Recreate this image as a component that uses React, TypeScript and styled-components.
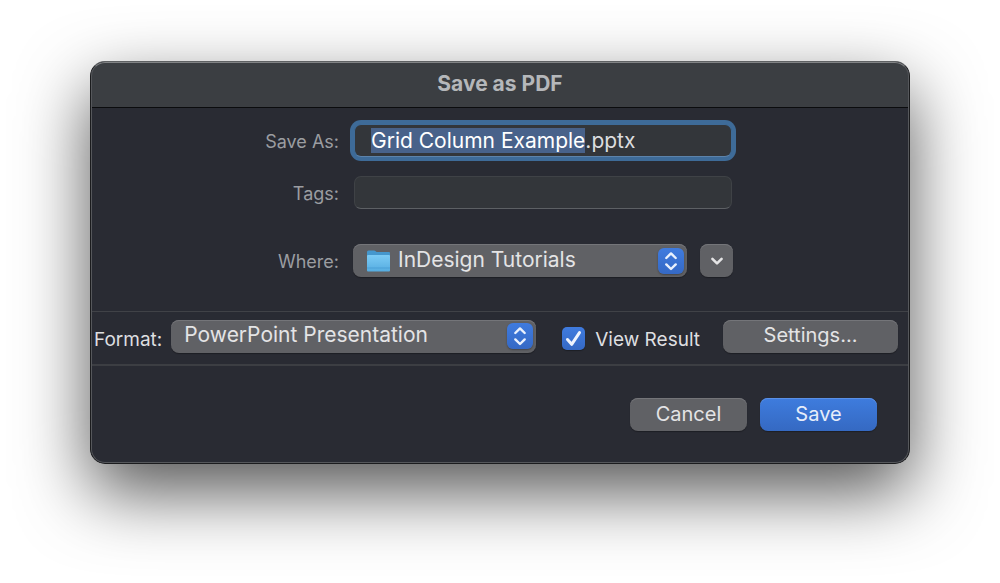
import React, { useEffect, useRef } from "react";
import styled, { createGlobalStyle, css } from "styled-components";

const Global = createGlobalStyle`
  *, *::before, *::after { box-sizing: border-box; }
  html, body { margin: 0; background: #fff; }
  body { font-family: Inter, "Liberation Sans", sans-serif; overflow-x: hidden; }
  #root { overflow: hidden; }
`;

const Desktop = styled.main`
  min-height: 100vh;
  padding: 61px 90px 120px;
  background: #fff;
`;

const Dialog = styled.form`
  position: relative;
  min-width: 800px;
  border: 1px solid #1b1c1e;
  border-top-color: #5f6163;
  border-radius: 15px;
  background: #292b33;
  overflow: hidden;
`;

const DialogShadow = styled.div`
  border-radius: 15px;
  box-shadow: 0 28px 70px rgba(0, 0, 0, 0.67);
`;

const Rim = styled.div`
  position: absolute;
  inset: 0;
  border: 1px solid #55575b;
  border-top-color: #828486;
  border-radius: 14px;
  pointer-events: none;
`;

const TitleBar = styled.header`
  display: flex;
  align-items: center;
  justify-content: center;
  height: 46px;
  padding-bottom: 2px;
  border-bottom: 1px solid #0b0c0e;
  background: #3b3e42;
`;

const Title = styled.h1`
  margin: 0;
  color: #b5b7ba;
  font-size: 21px;
  line-height: 24px;
  font-weight: 700;
`;

const Fields = styled.div`
  display: grid;
  grid-template-columns: 248fr 378fr 162fr;
  column-gap: 15px;
  padding: 16px 0 34px;
`;

const FieldRow = styled.div<{ $spaced?: boolean }>`
  display: grid;
  grid-column: 1 / -1;
  grid-template-columns: subgrid;
  align-items: center;
  margin-bottom: ${(p) => (p.$spaced ? 35 : 19)}px;
  &:last-child { margin-bottom: 0; }
`;

const FieldLabel = styled.label`
  padding-top: 3px;
  color: #9b9da1;
  font-size: 18px;
  line-height: 24px;
  text-align: right;
`;

const TextField = styled.input<{ $active?: boolean }>`
  width: 100%;
  height: 33px;
  padding: 0 16px;
  border: 1px solid #3f4246;
  border-bottom-color: #5d6064;
  border-radius: 7px;
  outline: none;
  background: #33363a;
  color: #dcdddf;
  font: 400 21px/28px Inter, "Liberation Sans", sans-serif;
  &::selection { background: #48628a; color: #fff; }
  ${(p) =>
    p.$active &&
    css`
      border-color: #3e6b98;
      border-bottom-color: #5c83ab;
      box-shadow: 0 0 0 4px #3e6b98;
    `}
`;

const PopupRow = styled.div`
  display: flex;
  gap: 13px;
  margin: 0 -1px;
`;

const Popup = styled.div`
  display: grid;
  flex: 1;
  align-items: center;
  & > * { grid-area: 1 / 1; }
`;

const raised = css`
  border: 0;
  border-radius: 8px;
  background: #606165;
  box-shadow: inset 0 1px #747579, 0 1px 1px rgba(0, 0, 0, 0.3);
  color: #e4e4e5;
  font: 400 20px/24px Inter, "Liberation Sans", sans-serif;
`;

const Select = styled.select<{ $withIcon?: boolean }>`
  ${raised}
  appearance: none;
  width: 100%;
  height: 33px;
  padding: 0 40px 2px ${(p) => (p.$withIcon ? 45 : 13)}px;
  font-size: 21px;
`;

const StepperBadge = styled.span`
  display: grid;
  place-items: center;
  justify-self: end;
  width: 26px;
  height: 26px;
  margin-right: 3px;
  border-radius: 6px;
  background: linear-gradient(#3f7bdf, #3569c5);
  box-shadow: 0 1px 2px rgba(0, 0, 0, 0.3);
  pointer-events: none;
`;

const FolderIcon = styled.svg`
  justify-self: start;
  margin-left: 13px;
  pointer-events: none;
`;

const Button = styled.button<{ $primary?: boolean; $width: number }>`
  ${raised}
  width: ${(p) => p.$width}px;
  height: 33px;
  padding: 0 0 2px;
  ${(p) =>
    p.$primary &&
    css`
      background: linear-gradient(#3e7cde, #3569c2);
      box-shadow: inset 0 1px #5a90e6, 0 1px 1px rgba(0, 0, 0, 0.3);
      color: #e6edfa;
    `}
`;

const IconButton = styled.button`
  ${raised}
  display: grid;
  place-items: center;
  width: 33px;
  height: 33px;
  padding: 0;
`;

const Options = styled.section`
  display: flex;
  align-items: center;
  height: 55px;
  padding: 0 11px 4px 3px;
  border-top: 1px solid #404247;
  border-bottom: 2px solid #3c3e43;
`;

const OptionLabel = styled.label`
  color: #dedfe0;
  font-size: 19px;
  line-height: 24px;
  padding-top: 8px;
`;

const FormatPopup = styled(Popup)`
  margin: 0 26px 0 9px;
`;

const CheckBox = styled.span`
  display: grid;
  margin: 4px 10px 0 0;
  & > * { grid-area: 1 / 1; }
`;

const CheckInput = styled.input`
  appearance: none;
  width: 23px;
  height: 23px;
  margin: 0;
  border-radius: 5px;
  background: linear-gradient(#3f7bdf, #3569c5);
  box-shadow: 0 1px 1px rgba(0, 0, 0, 0.3);
`;

const Tick = styled.svg`
  pointer-events: none;
`;

const SettingsSlot = styled.div`
  display: flex;
  margin-left: 23px;
`;

const Actions = styled.footer`
  display: flex;
  justify-content: flex-end;
  gap: 13px;
  padding: 32px 32px;
`;

function Stepper() {
  return (
    <StepperBadge aria-hidden="true">
      <svg width="26" height="26" viewBox="0 0 26 26" fill="none" stroke="#eaf1fd" strokeWidth="2.4" strokeLinecap="round" strokeLinejoin="round">
        <path d="M8.3 10 13 5.4 17.7 10M8.3 16.4 13 21 17.7 16.4" />
      </svg>
    </StepperBadge>
  );
}

export default function App() {
  const nameRef = useRef<HTMLInputElement>(null);

  useEffect(() => {
    const el = nameRef.current;
    if (!el) return;
    el.focus({ preventScroll: true });
    el.setSelectionRange(0, el.value.lastIndexOf("."));
  }, []);

  return (
    <>
      <Global />
      <Desktop>
        <DialogShadow>
          <Dialog onSubmit={(e) => e.preventDefault()}>
            <TitleBar>
              <Title>Save as PDF</Title>
            </TitleBar>
            <Fields>
              <FieldRow>
                <FieldLabel htmlFor="name">Save As:</FieldLabel>
                <TextField id="name" ref={nameRef} $active defaultValue="Grid Column Example.pptx" spellCheck={false} autoComplete="off" />
              </FieldRow>
              <FieldRow $spaced>
                <FieldLabel htmlFor="tags">Tags:</FieldLabel>
                <TextField id="tags" />
              </FieldRow>
              <FieldRow>
                <FieldLabel htmlFor="where">Where:</FieldLabel>
                <PopupRow>
                  <Popup>
                    <Select id="where" $withIcon>
                      <option>InDesign Tutorials</option>
                    </Select>
                    <FolderIcon width="25" height="22" viewBox="0 0 25 22" aria-hidden="true">
                      <defs>
                        <linearGradient id="folder" x1="0" y1="0" x2="0" y2="1">
                          <stop offset="0" stopColor="#7ccbf5" />
                          <stop offset="1" stopColor="#55ace0" />
                        </linearGradient>
                      </defs>
                      <path d="M1 20V2Q1 .5 2.500 .5H8Q9 .5 9.700 1.200L10.600 2H23Q24 2 24 3V20Z" fill="#4597cd" />
                      <path d="M1 6Q1 5 2 5H23Q24 5 24 6V20.500Q24 21.500 23 21.500H2Q1 21.500 1 20.500Z" fill="url(#folder)" />
                      <path d="M1 18H24" stroke="#4b9fd6" strokeWidth="1" />
                    </FolderIcon>
                    <Stepper />
                  </Popup>
                  <IconButton type="button" aria-label="Show more options">
                    <svg width="14" height="10" viewBox="0 0 14 10" fill="none" stroke="#e4e4e5" strokeWidth="2.6" strokeLinecap="round" strokeLinejoin="round">
                      <path d="M2.400 2.800 7 7.400 11.600 2.800" />
                    </svg>
                  </IconButton>
                </PopupRow>
              </FieldRow>
            </Fields>
            <Options>
              <OptionLabel htmlFor="format">Format:</OptionLabel>
              <FormatPopup>
                <Select id="format">
                  <option>PowerPoint Presentation</option>
                </Select>
                <Stepper />
              </FormatPopup>
              <CheckBox>
                <CheckInput id="view" type="checkbox" defaultChecked />
                <Tick width="23" height="23" viewBox="0 0 23 23" fill="none" stroke="#eef3fd" strokeWidth="3" strokeLinecap="round" strokeLinejoin="round" aria-hidden="true">
                  <path d="M5.500 12.500 9.700 17.300 17.500 5.600" />
                </Tick>
              </CheckBox>
              <OptionLabel htmlFor="view">View Result</OptionLabel>
              <SettingsSlot>
                <Button type="button" $width={175}>Settings...</Button>
              </SettingsSlot>
            </Options>
            <Actions>
              <Button type="button" $width={117}>Cancel</Button>
              <Button type="submit" $primary $width={117}>Save</Button>
            </Actions>
            <Rim />
          </Dialog>
        </DialogShadow>
      </Desktop>
    </>
  );
}
